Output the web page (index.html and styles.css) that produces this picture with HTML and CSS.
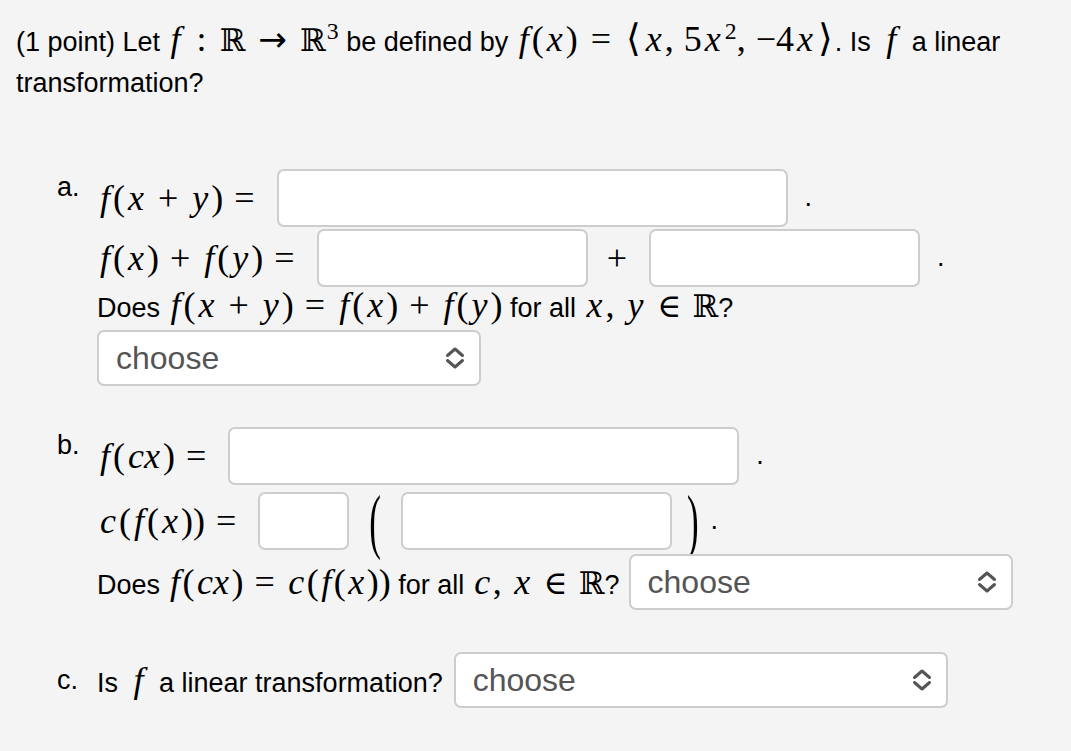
FILE: index.html
```html
<!DOCTYPE html>
<html>
<head>
<meta charset="utf-8">
<link rel="stylesheet" href="styles.css">
</head>
<body>
<div class="page">
  <p class="intro">(1 point) Let <span class="math"><i>f</i><span class="rel">:</span><span class="bb">ℝ</span><span class="rel arrow">→</span><span class="bb">ℝ</span><sup>3</sup></span> be defined by <span class="math"><i>f</i>(<i>x</i>)<span class="rel">=</span><span class="ang">⟨</span><i>x</i>,<span class="thin"></span>5<i>x</i><sup>2</sup>,<span class="thin"></span>−4<i>x</i><span class="ang">⟩</span></span>. Is <span class="math lone"><i>f</i></span> a linear transformation?</p>

  <div class="part part-a">
    <span class="label">a.</span>
    <div class="body">
      <div class="row">
        <span class="math"><i>f</i>(<i>x</i><span class="bin">+</span><i>y</i>)<span class="rel">=</span></span>
        <input class="box box-wide" type="text">
        <span class="dot">.</span>
      </div>
      <div class="row">
        <span class="math"><i>f</i>(<i>x</i>)<span class="bin">+</span><i>f</i>(<i>y</i>)<span class="rel">=</span></span>
        <input class="box box-mid" type="text">
        <span class="math plus">+</span>
        <input class="box box-mid box-after" type="text">
        <span class="dot">.</span>
      </div>
      <div class="row text-row">
        <span class="q">Does <span class="math"><i>f</i>(<i>x</i><span class="bin">+</span><i>y</i>)<span class="rel">=</span><i>f</i>(<i>x</i>)<span class="bin">+</span><i>f</i>(<i>y</i>)</span> for all <span class="math"><i>x</i>,<span class="thin"></span><i>y</i><span class="rel elem">∈</span><span class="bb">ℝ</span></span>?</span>
      </div>
      <div class="row sel-row-a">
        <div class="select-wrap sel-a">
          <select class="select"><option>choose</option></select>
          <svg class="chev" viewBox="0 0 22 24" width="22" height="24"><path d="M3.5 9.5 L11 3 L18.5 9.5 M3.5 14.5 L11 21 L18.5 14.5" fill="none" stroke="#555" stroke-width="3" stroke-linecap="round" stroke-linejoin="round"/></svg>
        </div>
      </div>
    </div>
  </div>

  <div class="part part-b">
    <span class="label">b.</span>
    <div class="body">
      <div class="row">
        <span class="math"><i>f</i>(<i>cx</i>)<span class="rel">=</span></span>
        <input class="box box-wide" type="text">
        <span class="dot">.</span>
      </div>
      <div class="row row-paren">
        <span class="math"><i>c</i>(<i>f</i>(<i>x</i>))<span class="rel">=</span></span>
        <input class="box box-small" type="text">
        <span class="bigparen open">(</span>
        <input class="box box-mid box-after" type="text">
        <span class="bigparen close">)</span>
        <span class="dot dot-low">.</span>
      </div>
      <div class="row sel-row-b">
        <span class="q tight">Does <span class="math"><i>f</i>(<i>cx</i>)<span class="rel">=</span><i>c</i>(<i>f</i>(<i>x</i>))</span> for all <span class="math"><i>c</i>,<span class="thin"></span><i>x</i><span class="rel elem">∈</span><span class="bb">ℝ</span></span>?</span>
        <div class="select-wrap sel-b">
          <select class="select"><option>choose</option></select>
          <svg class="chev" viewBox="0 0 22 24" width="22" height="24"><path d="M3.5 9.5 L11 3 L18.5 9.5 M3.5 14.5 L11 21 L18.5 14.5" fill="none" stroke="#555" stroke-width="3" stroke-linecap="round" stroke-linejoin="round"/></svg>
        </div>
      </div>
    </div>
  </div>

  <div class="part part-c">
    <span class="label label-c">c.</span>
    <div class="body">
      <div class="row sel-row-c">
        <span class="q">Is <span class="math lone"><i>f</i></span> a linear transformation?</span>
        <div class="select-wrap sel-c">
          <select class="select"><option>choose</option></select>
          <svg class="chev" viewBox="0 0 22 24" width="22" height="24"><path d="M3.5 9.5 L11 3 L18.5 9.5 M3.5 14.5 L11 21 L18.5 14.5" fill="none" stroke="#555" stroke-width="3" stroke-linecap="round" stroke-linejoin="round"/></svg>
        </div>
      </div>
    </div>
  </div>
</div>
</body>
</html>
```

FILE: styles.css
```css
html, body {
  margin: 0;
  padding: 0;
  background: #f4f4f4;
}

body {
  font-family: "Liberation Sans", Arial, sans-serif;
  font-size: 27px;
  color: #000;
}

.page {
  padding: 20px 16px 0 16px;
}

.intro {
  margin: 0;
  line-height: 41px;
  width: 1030px;
}

.math {
  font-family: "Liberation Serif", "DejaVu Serif", serif;
  font-size: 36px;
  line-height: 1;
  white-space: nowrap;
}

.math i {
  font-style: italic;
  padding: 0 3px;
}

.tight .math i {
  padding: 0 2.5px;
}

.math.lone {
  margin: 0 5px;
}

.math sup {
  font-size: 0.66em;
  line-height: 0;
  vertical-align: 0.52em;
  margin-left: 1px;
}

.bb {
  font-family: "DejaVu Serif", serif;
  font-size: 0.86em;
}

.rel {
  margin: 0 11px;
}

.intro .rel {
  margin: 0 13px;
}

.elem {
  font-size: 0.9em;
}

.arrow {
  font-family: "DejaVu Sans", sans-serif;
  font-size: 0.95em;
}

.bin {
  margin: 0 11px;
}

.thin {
  display: inline-block;
  width: 10px;
}

.ang {
  font-family: "DejaVu Serif", serif;
  font-size: 1.05em;
  margin: 0 2px;
}

.part {
  display: flex;
  align-items: flex-start;
}

.label {
  width: 40px;
  padding-left: 41px;
  box-sizing: content-box;
  line-height: 36px;
}

.label-c {
  line-height: 56px;
}

.part-a {
  margin-top: 65px;
}

.part-b {
  margin-top: 41px;
}

.part-c {
  margin-top: 42px;
}

.body {
  display: flex;
  flex-direction: column;
  gap: 2px;
}

.row {
  display: flex;
  align-items: center;
  min-height: 58px;
  white-space: nowrap;
}

.text-row {
  min-height: 38px;
  height: 38px;
  align-items: flex-start;
  margin-top: -2px;
  line-height: 31px;
}

.sel-row-a {
  min-height: 56px;
  margin-top: 3px;
}

.sel-row-b {
  min-height: 56px;
  margin-top: 2px;
}

.sel-row-c {
  min-height: 56px;
}

.box {
  box-sizing: border-box;
  height: 58px;
  border: 2px solid #cdcdcd;
  border-radius: 7px;
  background: #fff;
  margin: 0 0 0 11px;
  padding: 0 10px;
  font-size: 24px;
}

.box-wide {
  width: 511px;
}

.box-mid {
  width: 271px;
}

.box-small {
  width: 91px;
}

.box-after {
  margin-left: 0;
}

.plus {
  margin: 0 22px 0 19px;
}

.dot {
  font-size: 27px;
  margin-left: 17px;
  line-height: 1;
  transform: translateY(-1px);
}

.row-paren {
  padding-top: 5px;
}

.bigparen {
  font-family: "Liberation Serif", serif;
  font-size: 35px;
  line-height: 1;
  display: inline-block;
  transform: scaleY(2.05);
}

.bigparen.open {
  margin: 0 20px 0 20px;
}

.bigparen.close {
  margin: 0 0 0 15px;
}

.dot-low {
  margin-left: 12px;
}

.select-wrap {
  position: relative;
  height: 56px;
}

.sel-a {
  width: 384px;
}

.sel-b {
  width: 384px;
  margin-left: 9px;
}

.sel-c {
  width: 494px;
  margin-left: 11px;
}

.select {
  appearance: none;
  -webkit-appearance: none;
  box-sizing: border-box;
  width: 100%;
  height: 100%;
  border: 2px solid #cdcdcd;
  border-radius: 7px;
  background: #fff;
  font-family: "Liberation Sans", Arial, sans-serif;
  font-size: 32px;
  color: #555;
  padding: 0 0 0 17px;
  margin: 0;
}

.chev {
  position: absolute;
  right: 15px;
  top: 16px;
  pointer-events: none;
}
```
